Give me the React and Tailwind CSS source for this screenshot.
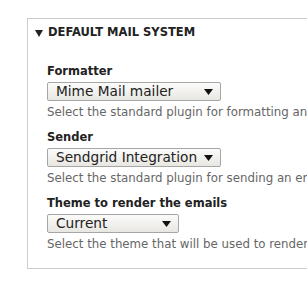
import React from 'react'

const fields = [
  {
    label: 'Formatter',
    value: 'Mime Mail mailer',
    width: 'w-[174px]',
    help: 'Select the standard plugin for formatting an email before sending it.',
  },
  {
    label: 'Sender',
    value: 'Sendgrid Integration',
    width: 'w-[174px]',
    help: 'Select the standard plugin for sending an email after formatting it.',
  },
  {
    label: 'Theme to render the emails',
    value: 'Current',
    width: 'w-[132px]',
    help: 'Select the theme that will be used to render the emails.',
  },
]

function FakeSelect({ value, width }) {
  return (
    <div
      className={`${width} h-[19px] flex items-center justify-between pl-[8px] pr-[7px] border border-[#a6a6a6] rounded-[2px] bg-gradient-to-b from-[#fbfbfa] to-[#e8e7e2] text-[13.7px] leading-none text-[#222]`}
    >
      <span>{value}</span>
      <svg width="9" height="6" viewBox="0 0 9 6" className="shrink-0">
        <path d="M0 0H9L4.5 6Z" fill="#111" />
      </svg>
    </div>
  )
}

export default function App() {
  return (
    <div className="w-[307px] h-[281px] overflow-hidden bg-white font-['DejaVu_Sans',sans-serif] text-[#333]">
      <div className="ml-[27px] mt-[18px] w-[600px] pb-[16px] border border-[#ccc]">
        <div className="flex items-center gap-[5px] pl-[7px] h-[28px]">
          <svg width="8" height="7" viewBox="0 0 8 7">
            <path d="M0 0H8L4 7Z" fill="#222" />
          </svg>
          <span className="text-[11.5px] font-bold uppercase text-[#222] leading-none">
            Default mail system
          </span>
        </div>
        <div className="pl-[19px] pt-[16px] flex flex-col gap-[9px]">
          {fields.map((f) => (
            <div key={f.label} className="flex flex-col">
              <div className="text-[11.5px] font-bold text-[#222] leading-[16px] mb-[3px]">{f.label}</div>
              <FakeSelect value={f.value} width={f.width} />
              <div className="text-[11.8px] leading-[16px] mt-[3px] text-[#666] whitespace-nowrap">{f.help}</div>
            </div>
          ))}
        </div>
      </div>
    </div>
  )
}
